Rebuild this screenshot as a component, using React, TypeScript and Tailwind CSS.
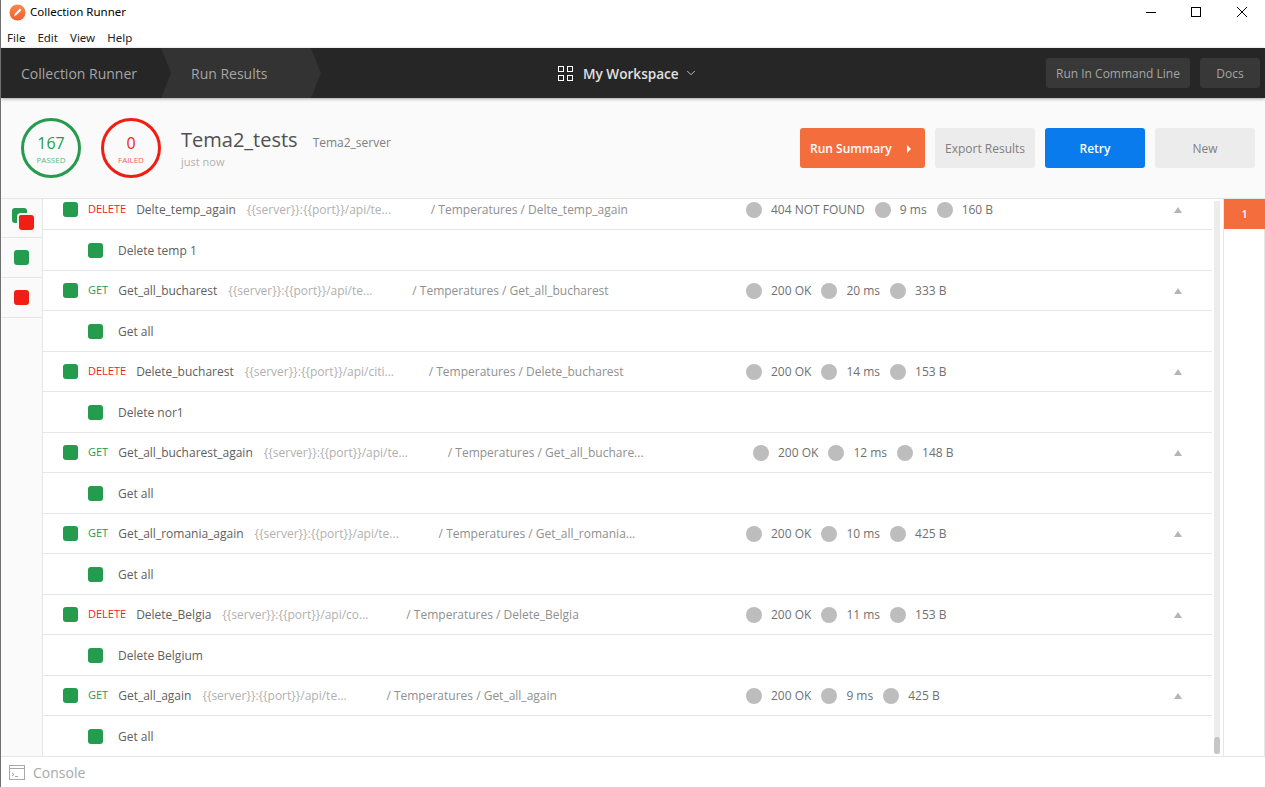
import React from "react";
import { ChevronDown } from "lucide-react";

interface IRow {
  method: string,
  name: string,
  url: string,
  path: string,
  status: string,
  time: string,
  size: string,
  test: string,
  left?: number,
}

const rows: IRow[] = [
  { method: "DELETE", name: "Delte_temp_again", url: "{{server}}:{{port}}/api/te...", path: "/ Temperatures / Delte_temp_again", status: "404 NOT FOUND", time: "9 ms", size: "160 B", test: "Delete temp 1" },
  { method: "GET", name: "Get_all_bucharest", url: "{{server}}:{{port}}/api/te...", path: "/ Temperatures / Get_all_bucharest", status: "200 OK", time: "20 ms", size: "333 B", test: "Get all" },
  { method: "DELETE", name: "Delete_bucharest", url: "{{server}}:{{port}}/api/citi...", path: "/ Temperatures / Delete_bucharest", status: "200 OK", time: "14 ms", size: "153 B", test: "Delete nor1" },
  { method: "GET", name: "Get_all_bucharest_again", url: "{{server}}:{{port}}/api/te...", path: "/ Temperatures / Get_all_buchare...", status: "200 OK", time: "12 ms", size: "148 B", test: "Get all", left: 665 },
  { method: "GET", name: "Get_all_romania_again", url: "{{server}}:{{port}}/api/te...", path: "/ Temperatures / Get_all_romania...", status: "200 OK", time: "10 ms", size: "425 B", test: "Get all" },
  { method: "DELETE", name: "Delete_Belgia", url: "{{server}}:{{port}}/api/co...", path: "/ Temperatures / Delete_Belgia", status: "200 OK", time: "11 ms", size: "153 B", test: "Delete Belgium" },
  { method: "GET", name: "Get_all_again", url: "{{server}}:{{port}}/api/te...", path: "/ Temperatures / Get_all_again", status: "200 OK", time: "9 ms", size: "425 B", test: "Get all" },
];

const Square = ({ red }: { red?: boolean }) => (
  <span className={`block w-[15px] h-[15px] rounded-[3px] shrink-0 ${red ? "bg-[#f01e14]" : "bg-[#259b4d]"}`}></span>
);

const Dot = () => <span className="block w-4 h-4 rounded-full bg-[#bdbdbd] shrink-0"></span>;

const Row = ({ row }: { row: IRow }) => (
  <>
    <div className="h-10 border-b border-[#e6e6e6] flex items-center pl-5 pr-[30px] text-xs">
      <Square />
      <div className="ml-[10px] flex items-center" style={{ width: row.left || 658 }}>
        <span className={`text-[11px] mr-[10px] ${row.method === "GET" ? "text-[#259b4d]" : "text-[#f01e14]"}`}>{row.method}</span>
        <span className="text-[#606060]">{row.name}</span>
        <span className="ml-[11px] w-[184px] shrink-0 text-[#b0b0b0]">{row.url}</span>
        <span className="text-[#909090] whitespace-nowrap">{row.path}</span>
      </div>
      <div className="flex items-center text-[#707070]">
        <Dot />
        <span className="ml-[9px]">{row.status}</span>
        <span className="ml-[10px]"><Dot /></span>
        <span className="ml-[9px]">{row.time}</span>
        <span className="ml-[10px]"><Dot /></span>
        <span className="ml-[9px]">{row.size}</span>
      </div>
      <span className="ml-auto w-0 h-0 border-x-[4px] border-x-transparent border-b-[6px] border-b-[#b5b5b5]"></span>
    </div>
    <div className="h-[41px] border-b border-[#e6e6e6] flex items-center pl-[45px] text-xs text-[#606060]">
      <Square />
      <span className="ml-[15px] mt-[2px]">{row.test}</span>
    </div>
  </>
);

const App = () => {
  return (
    <div className="w-[1265px] h-[787px] overflow-hidden bg-white flex flex-col border-l border-[#707070] font-['Open_Sans',sans-serif]">
      <div className="h-6 shrink-0 flex items-center relative">
        <svg width="17" height="17" viewBox="0 0 17 17" className="ml-2">
          <defs>
            <linearGradient id="logo" x1="0" y1="0" x2="0" y2="1">
              <stop offset="0" stopColor="#f9884f" />
              <stop offset="1" stopColor="#ef5f2b" />
            </linearGradient>
          </defs>
          <circle cx="8.5" cy="8.5" r="8" fill="url(#logo)" />
          <path d="M5 12.5 L6 9.5 L11 4.5 L12.5 6 L7.5 11 Z" fill="#fff" />
        </svg>
        <span className="ml-[4px] text-[11.5px] text-black font-['Noto_Sans',sans-serif]">Collection Runner</span>
        <div className="ml-auto flex items-center">
          <svg width="10" height="10" viewBox="0 0 10 10" className="mr-[35px]"><path d="M0 5.5H10" stroke="#000" /></svg>
          <svg width="10" height="10" viewBox="0 0 10 10" className="mr-9"><rect x="0.5" y="0.5" width="9" height="9" fill="none" stroke="#000" /></svg>
          <svg width="10" height="10" viewBox="0 0 10 10" className="mr-[18px]"><path d="M0 0L10 10M10 0L0 10" stroke="#000" /></svg>
        </div>
      </div>
      <div className="h-6 shrink-0 flex items-center pt-[3px] pl-[6px] gap-[12px] text-[11.5px] text-[#222] font-['Noto_Sans',sans-serif]">
        <span>File</span><span>Edit</span><span>View</span><span>Help</span>
      </div>

      <div className="h-[50px] shrink-0 bg-[#262626] flex items-stretch shadow-[0_1px_3px_rgba(0,0,0,0.35)] relative z-10">
        <div className="w-[160px] flex items-center pt-[2px] pl-5 text-sm text-[#a5a5a5] whitespace-nowrap">Collection Runner</div>
        <div className="w-[160px] bg-[#333333] flex items-center pt-[2px] pl-[30px] text-sm text-[#a5a5a5] [clip-path:polygon(0_0,150px_0,160px_50%,150px_100%,0_100%,10px_50%)]">Run Results</div>
        <div className="ml-[237px] flex items-center">
          <svg width="15" height="15" viewBox="0 0 15 15" fill="none" stroke="#fff">
            <rect x="0.5" y="0.5" width="5" height="5" />
            <rect x="9.5" y="0.5" width="5" height="5" />
            <rect x="0.5" y="9.5" width="5" height="5" />
            <rect x="9.5" y="9.5" width="5" height="5" />
          </svg>
          <span className="ml-[10px] pt-[2px] text-[13.6px] font-semibold text-[#e0e0e0]">My Workspace</span>
          <ChevronDown size={14} strokeWidth={1.5} className="ml-[5px] text-[#d0d0d0]" />
        </div>
        <div className="ml-auto flex items-center gap-[10px] pr-[5px] text-xs text-[#a5a5a5]">
          <div className="w-[144px] h-[30px] pt-[2px] bg-[#383838] rounded-[3px] flex items-center justify-center">Run In Command Line</div>
          <div className="w-[60px] h-[30px] pt-[2px] bg-[#383838] rounded-[3px] flex items-center justify-center">Docs</div>
        </div>
      </div>

      <div className="h-[101px] shrink-0 bg-[#fafafa] border-b border-[#e6e6e6] flex items-center pl-5 pr-[10px]">
        <div className="w-[60px] h-[60px] rounded-full border-[3px] border-[#259b4d] flex flex-col items-center justify-center pt-[3px]">
          <span className="text-base leading-[20px] text-[#259b4d]">167</span>
          <span className="text-[8px] leading-[12px] mt-[1px] text-[#5cb97c]">PASSED</span>
        </div>
        <div className="ml-5 w-[60px] h-[60px] rounded-full border-[3px] border-[#f01e14] flex flex-col items-center justify-center pt-[3px]">
          <span className="text-base leading-[20px] text-[#f01e14]">0</span>
          <span className="text-[8px] leading-[12px] mt-[1px] text-[#f4605a]">FAILED</span>
        </div>
        <div className="ml-5 flex flex-col -mt-[1px]">
          <div className="flex items-baseline">
            <span className="text-xl leading-[27px] text-[#505050]">Tema2_tests</span>
            <span className="ml-[15px] text-xs text-[#808080]">Tema2_server</span>
          </div>
          <span className="text-[11px] leading-[15px] mt-[1px] text-[#b0b0b0]">just now</span>
        </div>
        <div className="ml-auto flex items-center gap-[10px] text-xs">
          <div className="w-[125px] h-10 pt-[2px] bg-[#f46e3d] rounded-[3px] flex items-center pl-[10px] text-white font-semibold">
            Run Summary
            <span className="ml-[15px] w-0 h-0 border-y-[4px] border-y-transparent border-l-[4px] border-l-white"></span>
          </div>
          <div className="w-[100px] h-10 pt-[2px] bg-[#ececec] rounded-[3px] flex items-center justify-center text-[#808080]">Export Results</div>
          <div className="w-[100px] h-10 pt-[2px] bg-[#097bed] rounded-[3px] flex items-center justify-center text-white font-semibold">Retry</div>
          <div className="w-[100px] h-10 pt-[2px] bg-[#ececec] rounded-[3px] flex items-center justify-center text-[#808080]">New</div>
        </div>
      </div>

      <div className="h-[558px] shrink-0 flex border-b border-[#e6e6e6]">
        <div className="w-[42px] shrink-0 bg-[#fafafa] border-r border-[#e6e6e6]">
          <div className="h-[39px] border-b border-[#e6e6e6] relative">
            <span className="absolute left-[11px] top-[9px]"><Square /></span>
            <span className="absolute left-[16px] top-[14px] border-2 border-[#f4f4f4] rounded-[4px]"><Square red /></span>
          </div>
          <div className="h-10 border-b border-[#e6e6e6] flex items-center justify-center"><Square /></div>
          <div className="h-10 border-b border-[#e6e6e6] flex items-center justify-center"><Square red /></div>
        </div>
        <div className="w-[1169px] shrink-0 overflow-hidden">
          <div className="-mt-[9px]">
            {rows.map((row) => <Row key={row.name} row={row} />)}
          </div>
        </div>
        <div className="w-[11px] shrink-0 pt-[2px] pb-[2px] pl-[2px]">
          <div className="w-[6px] h-full bg-[#ececec] flex items-end">
            <div className="w-[6px] h-[17px] rounded-[3px] bg-[#c6c6c6]"></div>
          </div>
        </div>
        <div className="w-[42px] shrink-0 border-l border-[#e6e6e6] flex flex-col">
          <div className="h-[30px] shrink-0 bg-[#f46e3d] flex items-center justify-center text-[10px] font-semibold text-white">1</div>
          <div className="flex-1 border-r border-[#e6e6e6]"></div>
        </div>
      </div>

      <div className="flex-1 flex items-center pl-2">
        <svg width="16" height="15" viewBox="0 0 16 15" fill="none" stroke="#a8a8a8">
          <rect x="0.5" y="0.5" width="15" height="14" />
          <path d="M0.5 3.5H15.5M3 8L5 9.5L3 11M6 11.5H9" />
        </svg>
        <span className="ml-2 mt-[2px] text-sm text-[#a8a8a8]">Console</span>
      </div>
    </div>
  );
};

export default App;
